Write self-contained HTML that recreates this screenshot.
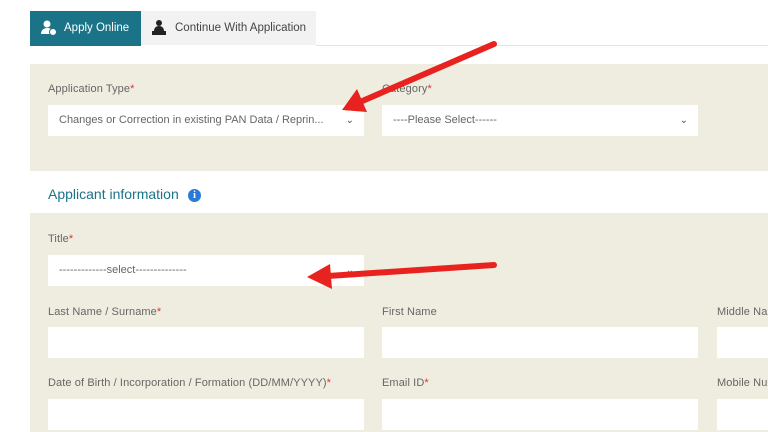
<!DOCTYPE html>
<html><head><meta charset="utf-8"><style>
*{margin:0;padding:0;box-sizing:border-box}
body{width:768px;height:432px;overflow:hidden;background:#fff;font-family:"Liberation Sans",sans-serif;position:relative;color:#666}
.abs{position:absolute}
.tab1{left:30px;top:11px;width:111px;height:35px;background:#1b7388;color:#fff;font-size:11.5px;line-height:35px;padding-left:34px}
.tab2{left:141px;top:11px;width:175px;height:34px;background:#f2f2f2;color:#444;font-size:11.5px;line-height:34px;padding-left:34px}
.line{left:316px;top:45px;width:452px;height:1px;background:#e4e4e4}
.panel{background:#efede0;left:30px;width:738px}
.lbl{font-size:11px;color:#666;letter-spacing:0.1px}
.lbl b{color:#d33;font-weight:normal}
.box{background:#fff;height:31px;font-size:11px;color:#666;line-height:31px;padding-left:11px}
.chev{position:absolute;right:10px;top:0;font-size:10px;color:#555}
</style></head><body>
<div class="abs tab1">Apply Online</div>
<svg class="abs" style="left:40px;top:19px" width="18" height="18" viewBox="0 0 18 18"><circle cx="7" cy="5" r="3.5" fill="#fff"/><path d="M1 15c0-4 3-6 6-6s5 1 6 3v3z" fill="#fff"/><circle cx="13" cy="13" r="3.5" fill="#fff" stroke="#1b7388" stroke-width="1"/></svg>
<div class="abs tab2">Continue With Application</div>
<svg class="abs" style="left:151px;top:19px" width="16" height="18" viewBox="0 0 16 18"><circle cx="8" cy="4" r="3" fill="#222"/><path d="M3 12c0-3 2-5 5-5s5 2 5 5z" fill="#222"/><rect x="1" y="12" width="14" height="4" fill="#222"/></svg>
<div class="abs line"></div>
<div class="abs panel" style="top:64px;height:107px"></div>
<div class="abs lbl" style="left:48px;top:83px">Application Type<b>*</b></div>
<div class="abs lbl" style="left:382px;top:83px">Category<b>*</b></div>
<div class="abs box" style="left:48px;top:105px;width:316px">Changes or Correction in existing PAN Data / Reprin...<span class="chev">&#8964;</span></div>
<div class="abs box" style="left:382px;top:105px;width:316px">----Please Select------<span class="chev">&#8964;</span></div>
<div class="abs" style="left:48px;top:186px;font-size:14px;color:#1b7388">Applicant information</div>
<div class="abs" style="left:188px;top:189px;width:13px;height:13px;border-radius:50%;background:#2b7bd6;color:#fff;font-size:10px;font-weight:bold;text-align:center;line-height:13px;font-family:'Liberation Serif',serif">i</div>
<div class="abs panel" style="top:213px;height:219px"></div>
<div class="abs lbl" style="left:48px;top:233px">Title<b>*</b></div>
<div class="abs box" style="left:48px;top:255px;width:316px">-------------select--------------<span class="chev">&#8964;</span></div>
<div class="abs lbl" style="left:48px;top:306px">Last Name / Surname<b>*</b></div>
<div class="abs lbl" style="left:382px;top:306px">First Name</div>
<div class="abs lbl" style="left:717px;top:306px;white-space:nowrap">Middle Name</div>
<div class="abs box" style="left:48px;top:327px;width:316px"></div>
<div class="abs box" style="left:382px;top:327px;width:316px"></div>
<div class="abs box" style="left:717px;top:327px;width:60px"></div>
<div class="abs lbl" style="left:48px;top:377px">Date of Birth / Incorporation / Formation (DD/MM/YYYY)<b>*</b></div>
<div class="abs lbl" style="left:382px;top:377px">Email ID<b>*</b></div>
<div class="abs lbl" style="left:717px;top:377px;white-space:nowrap">Mobile Number</div>
<div class="abs box" style="left:48px;top:399px;width:316px"></div>
<div class="abs box" style="left:382px;top:399px;width:316px"></div>
<div class="abs box" style="left:717px;top:399px;width:60px"></div>
<svg class="abs" style="left:0;top:0" width="768" height="432">
<line x1="494" y1="44" x2="360" y2="102" stroke="#e8231f" stroke-width="6" stroke-linecap="round"/>
<polygon points="342,110 367,112 357,89" fill="#e8231f"/>
<line x1="494" y1="265" x2="328" y2="276" stroke="#e8231f" stroke-width="6" stroke-linecap="round"/>
<polygon points="307,277 330,264 332,289" fill="#e8231f"/>
</svg>
</body></html>
